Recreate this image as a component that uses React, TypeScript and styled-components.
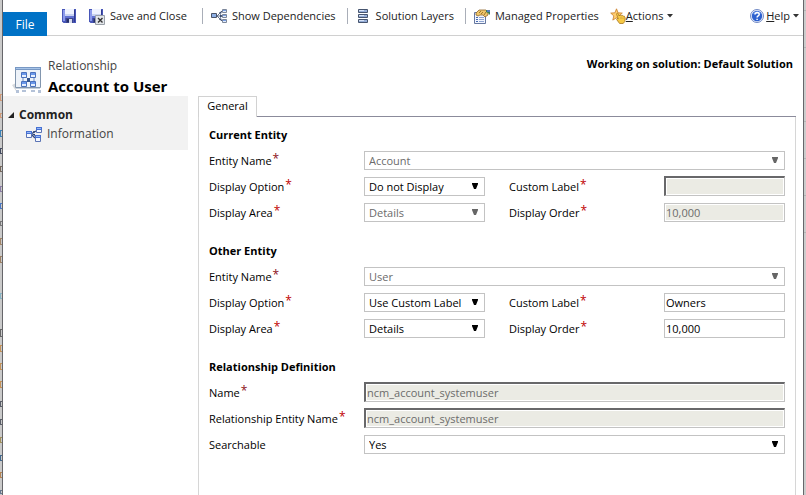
import React, { useId } from "react";
import styled, { createGlobalStyle } from "styled-components";

const GlobalStyle = createGlobalStyle`
  *, *::before, *::after { box-sizing: border-box; }
  body {
    margin: 0;
    background: #cccccc;
    color: #000;
    font: 11px/16px "Segoe UI", "Open Sans", "Noto Sans", sans-serif;
  }
  button, input, select { font: inherit; color: inherit; margin: 0; }
`;

const Desktop = styled.div`
  display: flex;
  min-height: 100vh;
`;

const LeftEdge = styled.div`
  flex: 0 0 2px;
  overflow: hidden;
  background: #cacaca;
`;

const RightEdge = styled.div`
  flex: 0 0 2px;
  background: linear-gradient(#b4b4b4, #b4b4b4) 0 10px / 2px 1px no-repeat,
    linear-gradient(#b4b4b4, #b4b4b4) 0 47px / 2px 1px no-repeat,
    linear-gradient(#b4b4b4, #b4b4b4) 0 121px / 2px 1px no-repeat,
    linear-gradient(#b4b4b4, #b4b4b4) 0 158px / 2px 1px no-repeat,
    linear-gradient(#b4b4b4, #b4b4b4) 0 195px / 2px 1px no-repeat,
    linear-gradient(#b4b4b4, #b4b4b4) 0 232px / 2px 1px no-repeat, #cccccc;
`;

const Window = styled.main`
  flex: 1;
  min-width: 0;
  display: flex;
  flex-direction: column;
  background: #fff;
  border: solid #66666a;
  border-width: 0 1px;
`;

const Toolbar = styled.header`
  display: flex;
  align-items: flex-start;
  height: 36px;
  border-bottom: 1px solid #d0d0d0;
`;

const FileButton = styled.button`
  width: 44px;
  height: 24px;
  margin-top: 12px;
  padding: 2px 0 0;
  border: 0;
  background: #0072c6;
  color: #fff;
  font-size: 12px;
`;

const ToolButton = styled.button<{ $gap?: number }>`
  display: flex;
  align-items: center;
  gap: ${(p) => p.$gap ?? 5}px;
  height: 32px;
  padding: 0;
  border: 0;
  background: none;
  white-space: nowrap;
  color: #222;
  svg { flex: none; }
`;

const Group = styled.div<{ $start: number; $divided?: boolean }>`
  display: flex;
  align-items: center;
  height: 32px;
  margin-left: ${(p) => p.$start}px;
  &::before {
    content: "";
    display: ${(p) => (p.$divided ? "block" : "none")};
    width: 1px;
    height: 16px;
    margin-right: 8px;
    background: #a9aeb8;
  }
`;

const Spacer = styled.div`
  flex: 1;
`;

const Heading = styled.section`
  display: flex;
  height: 60px;
  padding: 21px 10px 0 9px;
  gap: 6px;
`;

const HeadingIcon = styled.div`
  padding-top: 9px;
  height: 39px;
`;

const Titles = styled.div`
  flex: 1;
`;

const Kind = styled.div`
  font-size: 12px;
  line-height: 18px;
  color: #444;
`;

const Title = styled.h1`
  margin: 0;
  font-size: 15px;
  line-height: 22px;
  font-weight: 700;
`;

const Solution = styled.div`
  font-weight: 700;
  line-height: 14px;
`;

const Body = styled.div`
  flex: 1;
  display: flex;
  gap: 10px;
  padding-right: 7px;
`;

const Nav = styled.nav`
  flex: 0 0 185px;
  align-self: flex-start;
  padding: 10px 0 6px 5px;
  background: #f2f2f2;
`;

const NavTitle = styled.button`
  display: flex;
  align-items: center;
  gap: 5px;
  height: 18px;
  padding: 0;
  border: 0;
  background: none;
  font-size: 12px;
  font-weight: 700;
  color: #222;
`;

const NavLink = styled.a`
  display: flex;
  align-items: center;
  gap: 5px;
  height: 20px;
  padding-left: 18px;
  font-size: 12px;
  color: #444;
  text-decoration: none;
`;

const Content = styled.div`
  flex: 1;
  min-width: 0;
  display: flex;
  flex-direction: column;
`;

const TabBar = styled.div`
  display: flex;
  height: 21px;
`;

const Tab = styled.button`
  width: 59px;
  padding: 0 0 2px;
  border: 1px solid #d2d2d2;
  border-bottom: 0;
  background: #fff;
`;

const TabRule = styled.div`
  flex: 1;
  border-bottom: 1px solid #8b8b9b;
`;

const Panel = styled.form`
  flex: 1;
  display: flex;
  flex-direction: column;
  gap: 12px;
  padding: 5px 10px 10px;
  border: solid #d6d6d6;
  border-width: 0 1px;
`;

const Section = styled.fieldset`
  display: grid;
  grid-template-columns: 155px minmax(0, 1fr) 155px minmax(0, 1fr);
  grid-auto-rows: 26px;
  align-items: center;
  min-width: 0;
  margin: 0;
  padding: 0;
  border: 0;
`;

const SectionTitle = styled.h2`
  grid-column: 1 / -1;
  margin: 0;
  font-size: 11px;
  line-height: 16px;
  font-weight: 700;
`;

const Pair = styled.div<{ $span: "full" | "left" | "right" }>`
  grid-column: ${(p) => ({ full: "1 / -1", left: "1 / 3", right: "3 / 5" })[p.$span]};
  display: flex;
  align-items: flex-end;
  height: 20px;
  margin-bottom: 2px;
  padding-left: ${(p) => (p.$span === "right" ? 12 : 0)}px;
  padding-right: ${(p) => (p.$span === "left" ? 12 : 0)}px;
`;

const Label = styled.label`
  flex: 0 0 155px;
  display: flex;
  gap: 1px;
  height: 17px;
  white-space: nowrap;
`;

const Star = styled.span<{ $dark?: boolean }>`
  align-self: flex-start;
  height: 16px;
  margin-top: -2px;
  font-size: 12px;
  color: ${(p) => (p.$dark ? "#8c1018" : "#c00000")};
`;

const SelectWrap = styled.div<{ $disabled?: boolean }>`
  flex: 1;
  min-width: 0;
  display: grid;
  align-items: center;
  color: ${(p) => (p.$disabled ? "#666" : "#000")};
  > * { grid-area: 1 / 1; }
  > svg {
    justify-self: end;
    margin: 0 7px 2px 0;
    pointer-events: none;
  }
`;

const Select = styled.select`
  appearance: none;
  width: 100%;
  height: 19px;
  padding: 0 18px 0 4px;
  border: 1px solid #c3c3c3;
  border-radius: 0;
  background: #fff;
  line-height: 16px;
  &:disabled { opacity: 1; color: #6b6b6b; }
`;

const Input = styled.input<{ $sunken?: boolean }>`
  flex: 1;
  min-width: 0;
  width: 100%;
  height: ${(p) => (p.$sunken ? 20 : 19)}px;
  padding: 0 1px;
  border: 1px solid #c3c3c3;
  border-top: ${(p) => (p.$sunken ? "2px solid #68686a" : "1px solid #c3c3c3")};
  border-left: ${(p) => (p.$sunken ? "2px solid #68686a" : "1px solid #c3c3c3")};
  border-radius: 0;
  background: #fff;
  &:disabled {
    color: #6b6b6b;
    background: #ebebe4;
    box-shadow: inset 0 0 0 1px #fff;
  }
`;

const Caret = () => (
  <svg width="7" height="4" viewBox="0 0 7 4" aria-hidden="true">
    <path d="M1 0h6L4 3.5z" fill="#333" />
  </svg>
);

const Triangle = () => (
  <svg width="6" height="6" viewBox="0 0 6 6" aria-hidden="true">
    <path d="M0 0h6v1L4 6H2L0 1z" fill="currentColor" />
  </svg>
);

const Disk = ({ closing = false }: { closing?: boolean }) => (
  <svg width="17" height="17" viewBox="0 0 17 17" aria-hidden="true">
    <path d="M1 1h14v14H2.5L1 13.5z" fill="#4856b8" />
    <path d="M2 2h2v11H2z" fill="#8c9aec" />
    <path d="M13 2h1v12h-1z" fill="#303a90" />
    <path d="M4 1h9v7H4z" fill="#eef2ff" />
    <path d="M4 6h9v2H4z" fill="#c8d2f2" />
    <path d="M4 8h9v2H4z" fill="#6272d2" />
    <path d="M5 10h7v5H5z" fill="#3c468c" />
    <path d="M8 11h3v4H8z" fill="#d8ddee" />
    <path d="M6 11h2v3H6z" fill="#262f68" />
    {closing && (
      <>
        <path d="M7.5 7.5h9v9h-9z" fill="#e2e5e9" stroke="#9aa0a8" />
        <path d="m10 10 4.500 4.500m0-4.500L10 14.500" stroke="#333" strokeWidth="1.4" />
      </>
    )}
  </svg>
);

const Dependencies = () => (
  <svg width="17" height="16" viewBox="0 0 17 16" aria-hidden="true">
    <path d="M6 8h5M6 8l5-5M6 8l5 5" stroke="#63708a" fill="none" />
    <path d="M8 4.5 11 3l-1 3zM8 11.5l3 1.5-1-3zM9 6l2.5 2L9 10z" fill="#3a4c70" />
    <path d="M.5 5.5h5v4h-5z" fill="#8eb0e6" stroke="#4a5468" />
    <path d="M11.5 1.5h4v3h-4zM11.5 6.5h4v3h-4zM11.5 11.5h4v3h-4z" fill="#e4ecfa" stroke="#7c879a" />
    <path d="M12 2h3v1h-3zM12 7h3v1h-3zM12 12h3v1h-3z" fill="#7ba0e4" />
  </svg>
);

const Layers = () => (
  <svg width="13" height="14" viewBox="-2 0 13 14" aria-hidden="true">
    <path d="M.5.5h9v3h-9zM.5 5.5h9v3h-9zM.5 10.5h9v3h-9z" fill="#95acd6" stroke="#46546e" />
    <path d="M1 1h5v1H1zM1 6h5v1H1zM1 11h5v1H1z" fill="#d5e2f6" />
  </svg>
);

const Properties = () => (
  <svg width="17" height="15" viewBox="0 0 17 15" aria-hidden="true">
    <path d="M.5 3.5h11v11H.5z" fill="#f3f6fd" stroke="#65779f" />
    <path d="M2 8h2v1H2zM2 10h2v1H2zM2 12h2v1H2z" fill="#4467b0" />
    <path d="M5 8h5v1H5zM5 10h5v1H5zM5 12h5v1H5z" fill="#8da4d2" />
    <path d="M2 4 5 1h7l2 2v3l-3 2-2-2H6L4 7 2 6z" fill="#eec66b" stroke="#8d652b" strokeWidth=".8" />
    <path d="m5 4 2-2m0 3 2-2m1 3 2-3" stroke="#9c742e" />
    <path d="M12 1h4v5l-2-2-2-1z" fill="#397f54" />
    <path d="M13 1h3v2h-3z" fill="#567cc1" />
  </svg>
);

const ActionsIcon = () => (
  <svg width="16" height="16" viewBox="0 0 16 16" aria-hidden="true">
    <path d="m6.5.8 1.6 4 4.2.3-3.2 2.8 1 4.2-3.6-2.3-3.7 2.3 1-4.2L.7 5.1l4.2-.3z" fill="#ffce70" stroke="#c87d2b" strokeWidth=".8" />
    <path d="M6.5 6.2c0-1.4 1.8-1.3 2 0L9 8l1-1 1.2.7 1-.4 1 .8 1.2.1.8 1.8-.4 3.5-1.6 2H9.6l-3-4 .7-1.2 1 .6z" fill="#f6c945" stroke="#a87722" strokeWidth=".8" />
    <path d="M11 9v2m2-1.5V11" stroke="#c29131" strokeWidth=".6" />
  </svg>
);

const HelpIcon = () => (
  <svg width="14" height="14" viewBox="0 0 14 14" aria-hidden="true">
    <circle cx="7" cy="7" r="6.5" fill="#e9effc" stroke="#7189c4" />
    <circle cx="7" cy="7" r="5.2" fill="#2d61cf" />
    <path d="M3 5a4.5 4.5 0 0 1 8 0C8 4.5 6 5.5 3 5z" fill="#6d9bed" />
    <path d="M5 5.5c0-2.6 4.2-2.5 4.2 0C9.2 7 7.1 6.9 7.1 8.5M7.1 9.7v1.4" fill="none" stroke="#fff" strokeWidth="1.5" />
  </svg>
);

const InfoIcon = () => (
  <svg width="16" height="15" viewBox="0 0 16 15" aria-hidden="true">
    <path d="m5 7 5-3M5 7l4 4" stroke="#32497e" strokeWidth="1.4" />
    <path d="M.5 4.5h5v6h-5zM10.500.5h5v5h-5zM9.500 8.500h5v6h-5z" fill="#f4f8ff" stroke="#5b74b5" />
    <path d="M0 4h6v3H0zM10 0h6v3h-6zM9 8h6v3H9z" fill="#4771d2" />
    <path d="M1 5h4v1H1zM11 1h4v1h-4zM10 9h4v1h-4z" fill="#96b8f7" />
    <path d="m7 4 2 .3L8 6.500zM6 7l3 2v-2z" fill="#263c70" />
  </svg>
);

const RelationshipIcon = () => (
  <svg width="30" height="30" viewBox="0 0 30 30" aria-hidden="true">
    <path d="M0 19 4 17v8z" fill="#d6d9dd" />
    <path d="M3.500 1.500h25v20h-25z" fill="#eef3f9" stroke="#8296ae" />
    <path d="M3 1h26v3H3z" fill="#7898c4" />
    <path d="M4 2h24v1H4z" fill="#a7c4e8" />
    <path d="m13 10 7 7m0-7-7 7M11 12v4M22 12v4" stroke="#6d8cc4" />
    <path d="M9.500 6.500h5v5h-5zM18.500 6.500h5v5h-5zM9.500 15.500h5v5h-5zM18.500 15.500h5v5h-5z" fill="#e6f0ff" stroke="#4b72bd" />
    <path d="M10 7h4v2h-4zM19 7h4v2h-4zM10 16h4v2h-4zM19 16h4v2h-4z" fill="#6b98ea" />
    <path d="M15 12h3v4h-3z" fill="#34558f" />
    <path d="M4 22h24v1H4z" fill="#c6d0dc" />
    <path d="M10 24h4v2h-4zM19 24h4v2h-4zM4 24h3v3H4zM26 24h3v3h-3z" fill="#b4c2d8" />
  </svg>
);

const Expander = () => (
  <svg width="6" height="6" viewBox="0 0 6 6" aria-hidden="true">
    <path d="M6 0v6H0z" fill="#222" />
  </svg>
);

const edgeMarks: [number, number, string][] = [
  [94, 7, "#d09a78"], [113, 5, "#d09a78"], [130, 7, "#3c82b8"], [148, 6, "#444b60"],
  [166, 6, "#76685c"], [186, 6, "#8a7ca4"], [203, 6, "#4a78c4"], [221, 5, "#777"],
  [238, 7, "#a08468"], [256, 7, "#9c8064"], [293, 6, "#88b4c4"], [329, 8, "#666"],
  [345, 7, "#c49258"], [363, 7, "#c49258"], [381, 7, "#c49258"], [401, 6, "#5a5e68"],
  [419, 6, "#5a5e68"], [437, 6, "#a0905c"], [455, 6, "#42688c"], [472, 6, "#b48454"],
  [490, 4, "#687890"],
];

const EdgeDrawing = () => (
  <svg width="2" height="495" viewBox="0 0 2 495" aria-hidden="true">
    {edgeMarks.map(([y, h, fill]) => (
      <path key={y} d={`M0 ${y}h1v${h}h-1zM1 ${y}h1v1h-1zM1 ${y + h - 1}h1v1h-1z`} fill={fill} />
    ))}
  </svg>
);

type FieldProps = {
  label: string;
  value: string;
  kind?: "select" | "text";
  span?: "full" | "left" | "right";
  required?: boolean;
  darkStar?: boolean;
  disabled?: boolean;
  sunken?: boolean;
};

function Field({ label, value, kind = "select", span = "full", required = true, darkStar, disabled, sunken }: FieldProps) {
  const id = useId();
  return (
    <Pair $span={span}>
      <Label htmlFor={id}>
        {label}
        {required && <Star $dark={darkStar}>*</Star>}
      </Label>
      {kind === "select" ? (
        <SelectWrap $disabled={disabled}>
          <Select id={id} defaultValue={value} disabled={disabled}>
            <option>{value}</option>
          </Select>
          <Triangle />
        </SelectWrap>
      ) : (
        <Input id={id} type="text" defaultValue={value} disabled={disabled} $sunken={sunken} />
      )}
    </Pair>
  );
}

export default function App() {
  return (
    <>
      <GlobalStyle />
      <Desktop>
        <LeftEdge><EdgeDrawing /></LeftEdge>
        <Window>
          <Toolbar>
            <FileButton type="button">File</FileButton>
            <Group $start={14}>
              <ToolButton type="button" aria-label="Save"><Disk /></ToolButton>
            </Group>
            <Group $start={10}>
              <ToolButton type="button"><Disk closing />Save and Close</ToolButton>
            </Group>
            <Group $start={15} $divided>
              <ToolButton type="button" $gap={4}><Dependencies />Show Dependencies</ToolButton>
            </Group>
            <Group $start={11} $divided>
              <ToolButton type="button" $gap={7}><Layers />Solution Layers</ToolButton>
            </Group>
            <Group $start={11} $divided>
              <ToolButton type="button" $gap={4}><Properties />Managed Properties</ToolButton>
            </Group>
            <Group $start={11}>
              <ToolButton type="button" $gap={0}>
                <ActionsIcon /><span><u>A</u>ctions</span>&nbsp;<Caret />
              </ToolButton>
            </Group>
            <Spacer />
            <Group $start={0}>
              <ToolButton type="button" $gap={2}>
                <HelpIcon /><span><u>H</u>elp</span><Caret />
              </ToolButton>
            </Group>
            <Group $start={4} />
          </Toolbar>
          <Heading>
            <HeadingIcon><RelationshipIcon /></HeadingIcon>
            <Titles>
              <Kind>Relationship</Kind>
              <Title>Account to User</Title>
            </Titles>
            <Solution>Working on solution: Default Solution</Solution>
          </Heading>
          <Body>
            <Nav>
              <NavTitle type="button"><Expander />Common</NavTitle>
              <NavLink href="#information"><InfoIcon />Information</NavLink>
            </Nav>
            <Content>
              <TabBar role="tablist">
                <Tab type="button" role="tab" aria-selected="true">General</Tab>
                <TabRule />
              </TabBar>
              <Panel id="information">
                <Section>
                  <SectionTitle>Current Entity</SectionTitle>
                  <Field label="Entity Name" value="Account" disabled darkStar />
                  <Field label="Display Option" value="Do not Display" span="left" />
                  <Field label="Custom Label" value="" kind="text" span="right" disabled sunken />
                  <Field label="Display Area" value="Details" span="left" disabled />
                  <Field label="Display Order" value="10,000" kind="text" span="right" disabled />
                </Section>
                <Section>
                  <SectionTitle>Other Entity</SectionTitle>
                  <Field label="Entity Name" value="User" disabled darkStar />
                  <Field label="Display Option" value="Use Custom Label" span="left" />
                  <Field label="Custom Label" value="Owners" kind="text" span="right" />
                  <Field label="Display Area" value="Details" span="left" />
                  <Field label="Display Order" value="10,000" kind="text" span="right" />
                </Section>
                <Section>
                  <SectionTitle>Relationship Definition</SectionTitle>
                  <Field label="Name" value="ncm_account_systemuser" kind="text" disabled sunken darkStar />
                  <Field label="Relationship Entity Name" value="ncm_account_systemuser" kind="text" disabled sunken />
                  <Field label="Searchable" value="Yes" required={false} />
                </Section>
              </Panel>
            </Content>
          </Body>
        </Window>
        <RightEdge />
      </Desktop>
    </>
  );
}
